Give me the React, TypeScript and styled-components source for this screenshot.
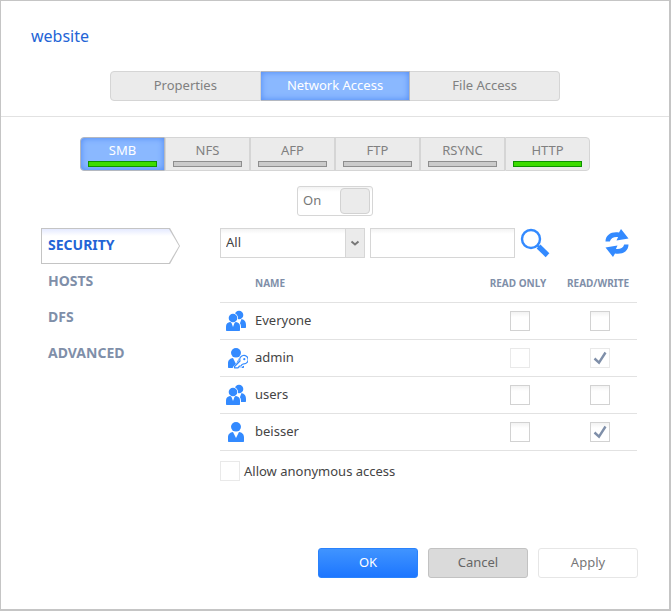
import React, { useState } from 'react';
import styled, { createGlobalStyle, css } from 'styled-components';

const GlobalStyle = createGlobalStyle`
  * { box-sizing: border-box; }
  body {
    margin: 0;
    background: #fff;
    color: #444;
    font: 13px/18px 'Noto Sans', 'Open Sans', sans-serif;
  }
  button, input, select { font: inherit; margin: 0; }
  button { cursor: pointer; }
`;

const Dialog = styled.main`
  display: flex;
  flex-direction: column;
  min-height: 100vh;
  border: solid #c5c5c5;
  border-width: 1px 2px 2px 1px;
  background: #fff;
`;

const Header = styled.header`
  display: flex;
  flex-direction: column;
  gap: 23px;
  padding: 23px 30px 15px;
  border-bottom: 1px solid #e2e2e2;
`;

const Title = styled.h1`
  margin: 0;
  color: #2364d6;
  font-size: 16px;
  font-weight: 400;
  line-height: 24px;
`;

const Segments = styled.div`
  display: flex;
  width: 100%;
  align-self: center;
`;

const PageTabs = styled(Segments)`
  max-width: 450px;
`;

const ProtocolTabs = styled(Segments)`
  max-width: 510px;
`;

const Segment = styled.button<{ $active: boolean }>`
  flex: 1;
  padding: 0;
  border: 1px solid #d5d5d5;
  background: #ebebeb;
  color: #808080;
  &:first-child { border-radius: 4px 0 0 4px; }
  &:last-child { border-radius: 0 4px 4px 0; }
  ${({ $active }) => $active && css`
    border-color: #b4b8c0;
    background: #8ab8ff;
    box-shadow: inset 0 0 6px #4d88f5;
    color: #fff;
  `}
`;

const PageTab = styled(Segment)`
  height: 30px;
  padding-bottom: 2px;
  & + & { border-left-width: 0; }
`;

const ProtocolTab = styled(Segment)`
  display: flex;
  flex-direction: column;
  justify-content: space-between;
  height: 34px;
  padding: 3px 7px;
  text-align: center;
`;

const StatusBar = styled.span<{ $enabled: boolean }>`
  width: 100%;
  height: 6px;
  border: 1px solid ${({ $enabled }) => ($enabled ? '#0e9200' : '#8e8e8e')};
  background: ${({ $enabled }) => ($enabled ? '#3ddc00' : '#cbcbcb')};
`;

const Body = styled.section`
  display: flex;
  flex-direction: column;
  align-items: center;
  padding-top: 20px;
`;

const Toggle = styled.button`
  display: flex;
  align-items: center;
  justify-content: space-between;
  width: 76px;
  height: 30px;
  margin: 15px 0 12px;
  padding: 0 2px 0 5px;
  border: 1px solid #d6d6d6;
  border-radius: 3px;
  background: linear-gradient(#f3f3f3, #fff 5px);
  color: #777;
`;

const ToggleText = styled.span`
  padding-bottom: 2px;
`;

const Knob = styled.span`
  width: 30px;
  height: 26px;
  border: 1px solid #d2d2d2;
  border-radius: 4px;
  background: #ebebeb;
`;

const Columns = styled.div`
  display: flex;
  gap: 40px;
  width: 100%;
  padding: 0 32px 0 40px;
`;

const Nav = styled.nav`
  display: flex;
  flex: 0 0 139px;
  flex-direction: column;
`;

const NavItem = styled.button<{ $active: boolean }>`
  position: relative;
  z-index: 0;
  height: 36px;
  padding: 0 7px 2px;
  border: 0;
  background: none;
  color: #7f8fa9;
  font-size: 14px;
  font-weight: 700;
  text-align: left;
  ${({ $active }) => $active && css`
    color: #2364d6;
    clip-path: polygon(0 0, 129px 0, 100% 50%, 129px 100%, 0 100%);
    background: #c4c4c4;
    &::before {
      content: '';
      position: absolute;
      inset: 1px;
      z-index: -1;
      background: linear-gradient(#e5eaff, #fff 7px);
      clip-path: polygon(0 0, 127px 0, 100% 50%, 127px 100%, 0 100%);
    }
  `}
`;

const Content = styled.div`
  flex: 1;
  min-width: 0;
`;

const Filters = styled.div`
  display: flex;
  align-items: center;
  gap: 5px;
  padding-right: 8px;
`;

const SelectBox = styled.div`
  display: grid;
  grid-template-columns: 1fr 20px;
  width: 145px;
  height: 30px;
`;

const Select = styled.select`
  grid-area: 1 / 1 / 2 / 3;
  appearance: none;
  padding: 0 24px 2px 5px;
  border: 1px solid #d6d6d6;
  border-radius: 0;
  background: linear-gradient(#f3f3f3, #fff 5px);
  color: #444;
`;

const SelectArrow = styled.span`
  display: grid;
  grid-area: 1 / 2;
  place-items: center;
  border: 1px solid #d6d6d6;
  background: #ebebeb;
  pointer-events: none;
`;

const SearchInput = styled.input`
  width: 145px;
  height: 30px;
  padding: 0 6px;
  border: 1px solid #d6d6d6;
  background: linear-gradient(#f3f3f3, #fff 5px);
`;

const IconButton = styled.button`
  display: flex;
  padding: 0;
  border: 0;
  background: none;
  color: #338aff;
  &:last-child { margin-left: auto; }
`;

const Table = styled.table`
  width: 100%;
  border-collapse: collapse;
  table-layout: fixed;
`;

const HeadCell = styled.th<{ $width?: number }>`
  width: ${({ $width }) => ($width ? `${$width}px` : 'auto')};
  height: 44px;
  padding: ${({ $width }) => ($width ? '6px 4px 0 0' : '6px 0 0 35px')};
  border-bottom: 1px solid #e2e2e2;
  color: #7f8fa9;
  font-size: 10px;
  font-weight: 700;
  text-align: ${({ $width }) => ($width ? 'center' : 'left')};
  white-space: nowrap;
`;

const Cell = styled.td`
  height: 37px;
  padding: 0;
  border-bottom: 1px solid #e2e2e2;
`;

const Account = styled.div`
  display: flex;
  align-items: center;
  gap: 7px;
  padding-left: 4px;
  svg { color: #338aff; }
`;

const AccountName = styled.span`
  padding-bottom: 2px;
`;

const CheckFrame = styled.span`
  display: grid;
  width: 20px;
  height: 20px;
  margin: 0 auto;
  svg { grid-area: 1 / 1; place-self: center; pointer-events: none; }
`;

const CheckInput = styled.input`
  grid-area: 1 / 1;
  appearance: none;
  width: 20px;
  height: 20px;
  border: 1px solid #d2d2d2;
  background: linear-gradient(#f2f2f2, #fff 5px);
  &:disabled { border-color: #e9e9e9; background: #fff; }
`;

const Anonymous = styled.label`
  display: flex;
  align-items: center;
  gap: 4px;
  margin-top: 10px;
  ${CheckFrame} { margin: 0; }
`;

const Footer = styled.footer`
  display: flex;
  justify-content: flex-end;
  gap: 10px;
  margin-top: auto;
  padding: 30px 31px 31px;
`;

const tones = {
  primary: css`border-color: #2a82fc; background: linear-gradient(#4094ff, #1d76ff); color: #fff;`,
  neutral: css`border-color: #c2c2c2; background: #dadada; color: #666;`,
  plain: css`border-color: #e6e6e6; background: #fff; color: #777;`,
};

const ActionButton = styled.button<{ $tone: keyof typeof tones }>`
  width: 100px;
  height: 30px;
  padding: 0 0 2px;
  border: 1px solid;
  border-radius: 3px;
  ${({ $tone }) => tones[$tone]}
`;

const SearchIcon = () => (
  <svg width="30" height="30" viewBox="0 0 30 30" fill="none" stroke="currentColor">
    <circle cx="11" cy="11" r="9" strokeWidth="2.4" />
    <path d="M17 17l2 2" strokeWidth="2" />
    <path d="M18.5 18.5l9 8.7" strokeWidth="5.4" />
  </svg>
);

const RefreshIcon = () => (
  <svg width="24" height="30" viewBox="0 0 24 30" fill="currentColor">
    <path d="M0.5 13.5C0.5 6.500 7 3.200 14 4.500L16 1l7.500 9.500-12 2 1.600-3.500C9.400 8.500 6 9.500 4.800 13.500z" />
    <path d="M23.5 16.5C23.5 23.500 17 26.800 10 25.500L8 29 0.500 19.500l12-2-1.600 3.500C14.600 21.500 18 20.500 19.200 16.500z" />
  </svg>
);

const AccountIcon = ({ kind }: { kind: Kind }) => (
  <svg width="24" height="22" viewBox="0 0 24 22" fill="currentColor">
    {kind === 'group' ? (
      <>
        <circle cx="15" cy="5" r="4.300" />
        <path d="M17.5 9c3 0.500 4.500 3 4.500 6V17c0 0.700-0.300 1-1 1h-4l-1-5z" />
        <path
          d="M2 20V16.500C2 13.500 4 12.300 6 12h6c2 0.300 4 1.500 4 4.500V20c0 0.700-0.300 1-1 1H3c-0.700 0-1-0.300-1-1z"
          stroke="#fff" strokeWidth="1.6" paintOrder="stroke"
        />
        <path d="M6.800 11h4.400L9 17z" fill="#fff" />
        <circle cx="9" cy="8" r="4.300" stroke="#fff" strokeWidth="1.6" paintOrder="stroke" />
      </>
    ) : (
      <>
        <ellipse cx="12" cy="5.8" rx="5" ry="4.8" />
        <path d="M4 20V16.500c0-3.500 2-5 5-5.500l3 6 3-6c3 0.500 5 2 5 5.500V20c0 0.700-0.300 1-1 1H5c-0.700 0-1-0.300-1-1z" />
        {kind === 'admin' && (
          <g strokeLinejoin="round">
            <path d="M10 20.500l6-6a4.200 4.200 0 1 1 4 3l-2 0.500-1 1.500h-2l-1.500 1.500z" fill="#fff" stroke="#fff" strokeWidth="2.4" />
            <path d="M10.500 19.500l5.500-5.500a4.200 4.200 0 1 1 4 2.800l-2 0.700-1 1.500h-1.500l-1.500 1.800h-3.500z" fill="#fff" stroke="currentColor" strokeWidth="1.2" />
            <circle cx="20.300" cy="12.200" r="1.100" />
          </g>
        )}
      </>
    )}
  </svg>
);

const CheckMark = () => (
  <svg width="14" height="14" viewBox="0 0 14 14" fill="none" stroke="#7f8fa9" strokeWidth="2.4">
    <path d="M1.5 7.5L6 11.600 12.500 1.500" />
  </svg>
);

const CheckBox = (props: React.InputHTMLAttributes<HTMLInputElement>) => (
  <CheckFrame>
    <CheckInput type="checkbox" {...props} />
    {props.checked && <CheckMark />}
  </CheckFrame>
);

type Kind = 'group' | 'admin' | 'user';
type Access = { name: string; kind: Kind; read: boolean; write: boolean; locked?: boolean };

const initialRows: Access[] = [
  { name: 'Everyone', kind: 'group', read: false, write: false },
  { name: 'admin', kind: 'admin', read: false, write: true, locked: true },
  { name: 'users', kind: 'group', read: false, write: false },
  { name: 'beisser', kind: 'user', read: false, write: true },
];

const protocols = ['SMB', 'NFS', 'AFP', 'FTP', 'RSYNC', 'HTTP'];
const enabledProtocols = ['SMB', 'HTTP'];

export default function App() {
  const [page, setPage] = useState('Network Access');
  const [protocol, setProtocol] = useState('SMB');
  const [section, setSection] = useState('SECURITY');
  const [rows, setRows] = useState(initialRows);

  const grant = (name: string, key: 'read' | 'write', value: boolean) =>
    setRows(rows.map((r) => (r.name === name ? { ...r, read: false, write: false, [key]: value } : r)));

  return (
    <>
      <GlobalStyle />
      <Dialog>
        <Header>
          <Title>website</Title>
          <PageTabs>
            {['Properties', 'Network Access', 'File Access'].map((p) => (
              <PageTab key={p} type="button" $active={p === page} onClick={() => setPage(p)}>{p}</PageTab>
            ))}
          </PageTabs>
        </Header>
        <Body>
          <ProtocolTabs>
            {protocols.map((p) => (
              <ProtocolTab key={p} type="button" $active={p === protocol} onClick={() => setProtocol(p)}>
                {p}
                <StatusBar $enabled={enabledProtocols.includes(p)} />
              </ProtocolTab>
            ))}
          </ProtocolTabs>
          <Toggle type="button" role="switch" aria-checked="true"><ToggleText>On</ToggleText><Knob /></Toggle>
          <Columns>
            <Nav>
              {['SECURITY', 'HOSTS', 'DFS', 'ADVANCED'].map((s) => (
                <NavItem key={s} type="button" $active={s === section} onClick={() => setSection(s)}>{s}</NavItem>
              ))}
            </Nav>
            <Content>
              <Filters>
                <SelectBox>
                  <Select aria-label="Account type"><option>All</option></Select>
                  <SelectArrow>
                    <svg width="10" height="8" viewBox="0 0 10 8" fill="none" stroke="#777" strokeWidth="2">
                      <path d="M1.5 2.5L5 5.5l3.5-3" />
                    </svg>
                  </SelectArrow>
                </SelectBox>
                <SearchInput type="text" aria-label="Search accounts" />
                <IconButton type="button" aria-label="Search"><SearchIcon /></IconButton>
                <IconButton type="button" aria-label="Refresh"><RefreshIcon /></IconButton>
              </Filters>
              <Table>
                <thead>
                  <tr>
                    <HeadCell>NAME</HeadCell>
                    <HeadCell $width={86}>READ ONLY</HeadCell>
                    <HeadCell $width={74}>READ/WRITE</HeadCell>
                  </tr>
                </thead>
                <tbody>
                  {rows.map((r) => (
                    <tr key={r.name}>
                      <Cell>
                        <Account><AccountIcon kind={r.kind} /><AccountName>{r.name}</AccountName></Account>
                      </Cell>
                      <Cell>
                        <CheckBox aria-label={`${r.name} read only`} checked={r.read} disabled={r.locked}
                          onChange={(e) => grant(r.name, 'read', e.target.checked)} />
                      </Cell>
                      <Cell>
                        <CheckBox aria-label={`${r.name} read/write`} checked={r.write} disabled={r.locked}
                          onChange={(e) => grant(r.name, 'write', e.target.checked)} />
                      </Cell>
                    </tr>
                  ))}
                </tbody>
              </Table>
              <Anonymous><CheckBox disabled />Allow anonymous access</Anonymous>
            </Content>
          </Columns>
        </Body>
        <Footer>
          <ActionButton type="submit" $tone="primary">OK</ActionButton>
          <ActionButton type="button" $tone="neutral">Cancel</ActionButton>
          <ActionButton type="button" $tone="plain">Apply</ActionButton>
        </Footer>
      </Dialog>
    </>
  );
}
